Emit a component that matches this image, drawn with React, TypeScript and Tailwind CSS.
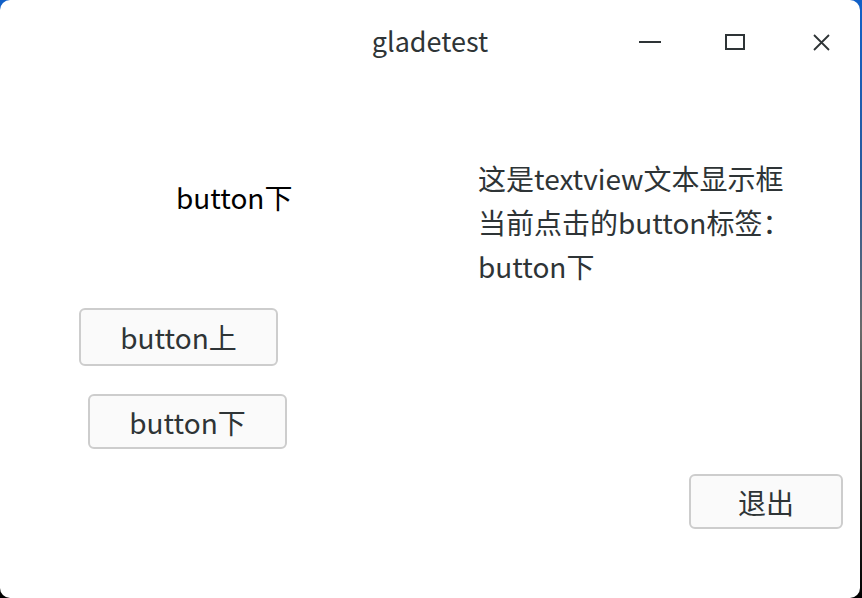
export default function App() {
  const font = { fontFamily: '"Noto Sans CJK SC", "Noto Sans", sans-serif' };
  return (
    <div
      className="flex h-[598px] w-[862px] bg-[linear-gradient(to_bottom,#1160c8_0%,#2a5a9a_30%,#6a6a6a_55%,#222_85%,#000_100%)]"
      style={font}
    >
      <div className="flex h-[598px] w-[860px] flex-col rounded-[10px] bg-white text-[#2e3436]">
        <div className="grid h-[84px] shrink-0 grid-cols-[1fr_auto_1fr] items-center">
          <div />
          <div className="mb-[3px] text-[27px] leading-none">gladetest</div>
          <div className="flex items-center justify-end pr-[30px]">
            <span className="block h-[2px] w-[22px] bg-[#2e3436]" />
            <span className="ml-[64px] block h-[16px] w-[20px] border-2 border-[#2e3436]" />
            <svg className="ml-[68px]" width="17" height="17" viewBox="0 0 17 17">
              <path d="M1 1 L16 16 M16 1 L1 16" stroke="#2e3436" strokeWidth="1.8" />
            </svg>
          </div>
        </div>
        <div className="flex flex-1">
          <div className="flex w-[478px] flex-col">
            <div className="ml-[176px] mt-[91px] text-[28px] leading-[44px] text-black">button下</div>
            <button className="ml-[79px] mt-[89px] h-[58px] w-[199px] rounded-[6px] border-2 border-[#cdcdcd] bg-[#fafafa] text-[28px] text-[#2e3436]">
              button上
            </button>
            <button className="ml-[88px] mt-[28px] h-[55px] w-[199px] rounded-[6px] border-2 border-[#cdcdcd] bg-[#fafafa] text-[28px] text-[#2e3436]">
              button下
            </button>
          </div>
          <div className="flex flex-1 flex-col">
            <div className="mt-[72px] text-[28px] leading-[44px]">
              <div>这是textview文本显示框</div>
              <div>当前点击的button标签：</div>
              <div>button下</div>
            </div>
            <button className="mr-[17px] mt-[186px] h-[55px] w-[154px] self-end rounded-[6px] border-2 border-[#cdcdcd] bg-[#fafafa] text-[28px] text-[#2e3436]">
              退出
            </button>
          </div>
        </div>
      </div>
    </div>
  );
}
